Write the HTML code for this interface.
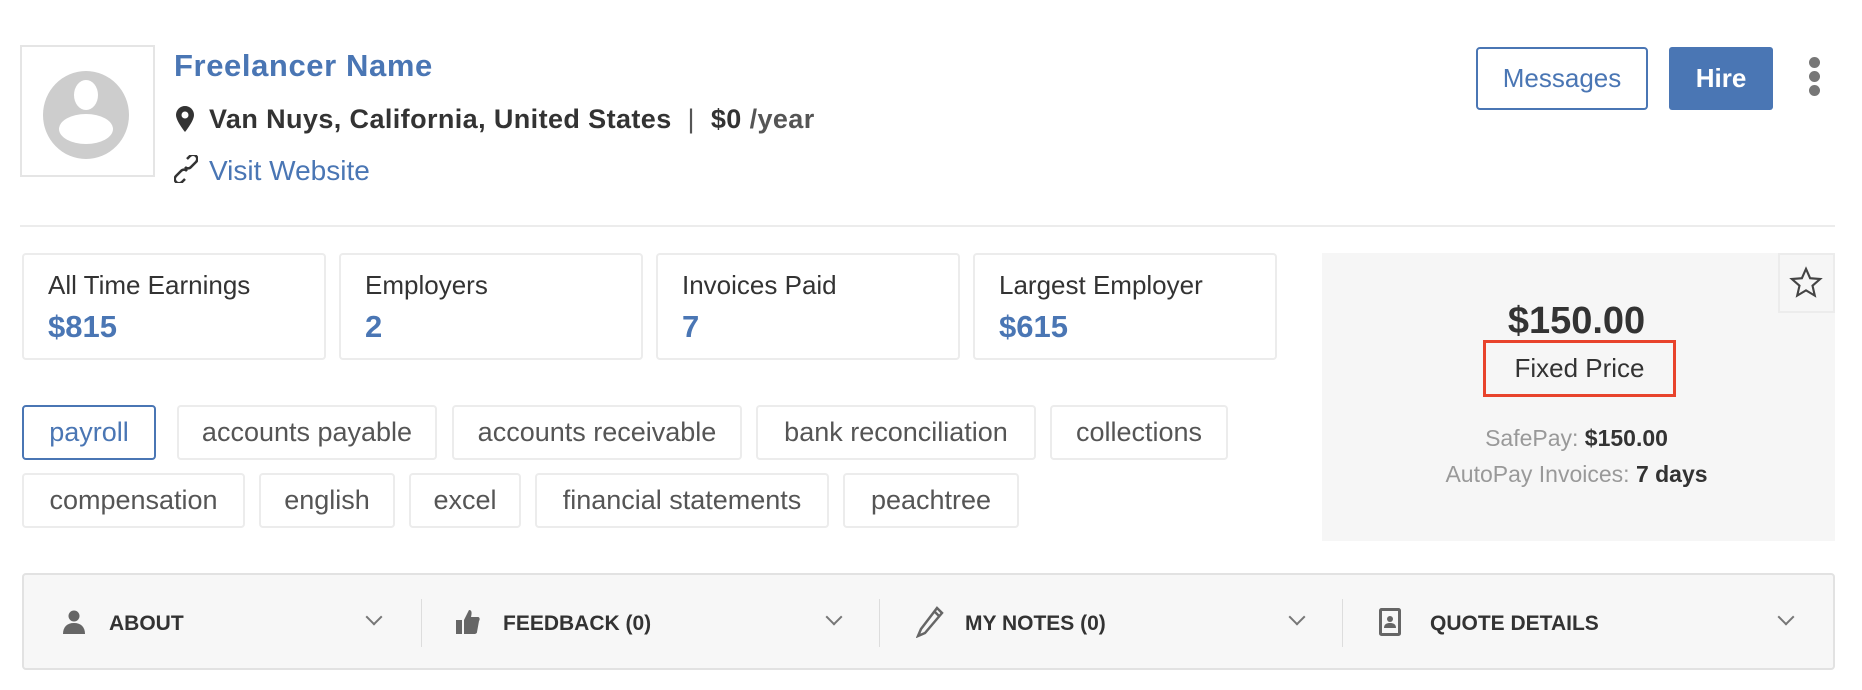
<!DOCTYPE html>
<html><head><meta charset="utf-8"><style>
*{margin:0;padding:0;box-sizing:border-box}
body{width:1862px;height:690px;background:#fff;font-family:"Liberation Sans",sans-serif;color:#333;position:relative;overflow:hidden}
.a{position:absolute}
.blue{color:#4a76b4}
.card{position:absolute;top:253px;height:107px;border:2px solid #ececec;border-radius:4px;padding:13px 24px}
.card .l{font-size:26px;color:#333;margin-top:2px}
.card .v{font-size:31px;font-weight:bold;color:#4a76b4;margin-top:8px}
.tag{position:absolute;height:55px;border:2px solid #ececec;border-radius:4px;font-size:27px;color:#555;line-height:51px;text-align:center;white-space:nowrap}
.sec{position:absolute;top:0;height:97px;display:flex;align-items:center;font-size:21px;font-weight:bold;color:#333}
.chev{position:absolute;top:36px;width:12px;height:12px;border-right:2px solid #777;border-bottom:2px solid #777;transform:rotate(45deg)}
.dv{position:absolute;top:24px;width:1px;height:48px;background:#ddd}
</style></head><body>
<div class="a" style="left:20px;top:45px;width:135px;height:132px;border:2px solid #e5e5e5;background:#fff">
<svg width="131" height="128" viewBox="0 0 131 128"><ellipse cx="64" cy="68" rx="43" ry="44" fill="#cdcdcd"/><ellipse cx="64" cy="48" rx="12" ry="15" fill="#fff"/><ellipse cx="64" cy="82" rx="27" ry="15" fill="#fff"/></svg></div>
<div class="a blue" style="left:174px;top:48px;font-size:31px;font-weight:bold;letter-spacing:0.6px">Freelancer Name</div>
<svg class="a" style="left:176px;top:106px" width="18" height="26" viewBox="0 0 18 26"><path d="M9 0C4 0 0 4 0 9c0 6 9 17 9 17s9-11 9-17c0-5-4-9-9-9z" fill="#333"/><circle cx="9" cy="9" r="3.5" fill="#fff"/></svg>
<div class="a" style="left:209px;top:104px;font-size:27px;font-weight:bold;color:#333;letter-spacing:0.4px">Van Nuys, California, United States <span style="font-weight:normal;color:#555;margin:0 8px">|</span> $0 <span style="color:#555">/year</span></div>
<svg class="a" style="left:174px;top:155px" width="24" height="28" viewBox="0 0 24 28" fill="none" stroke="#333" stroke-width="2.5"><path d="M13 4l3-3a4 4 0 016 6l-5 5a4 4 0 01-6 0"/><path d="M11 24l-3 3a4 4 0 01-6-6l5-5a4 4 0 016 0"/></svg>
<div class="a blue" style="left:209px;top:155px;font-size:28px">Visit Website</div>
<div class="a blue" style="left:1476px;top:47px;width:172px;height:63px;border:2px solid #4a76b4;border-radius:4px;font-size:26px;text-align:center;line-height:59px">Messages</div>
<div class="a" style="left:1669px;top:47px;width:104px;height:63px;background:#4a76b4;border-radius:3px;color:#fff;font-size:26px;font-weight:bold;text-align:center;line-height:63px">Hire</div>
<div class="a" style="left:1809px;top:57px;width:11px;height:11px;border-radius:50%;background:#777"></div>
<div class="a" style="left:1809px;top:71px;width:11px;height:11px;border-radius:50%;background:#777"></div>
<div class="a" style="left:1809px;top:85px;width:11px;height:11px;border-radius:50%;background:#777"></div>
<div class="a" style="left:20px;top:225px;width:1815px;height:2px;background:#ececec"></div>
<div class="card" style="left:22px;width:304px"><div class="l">All Time Earnings</div><div class="v">$815</div></div>
<div class="card" style="left:339px;width:304px"><div class="l">Employers</div><div class="v">2</div></div>
<div class="card" style="left:656px;width:304px"><div class="l">Invoices Paid</div><div class="v">7</div></div>
<div class="card" style="left:973px;width:304px"><div class="l">Largest Employer</div><div class="v">$615</div></div>
<div class="a" style="left:1322px;top:253px;width:513px;height:288px;background:#f6f6f6"></div>
<div class="a" style="left:1778px;top:253px;width:57px;height:60px;border:2px solid #ececec"></div>
<svg class="a" style="left:1789px;top:266px" width="34" height="34" viewBox="0 0 24 24" fill="none" stroke="#444" stroke-width="1.5"><path d="M12 2l2.9 6.6 7.1.6-5.4 4.7 1.6 7-6.2-3.7-6.2 3.7 1.6-7L2 9.2l7.1-.6z"/></svg>
<div class="a" style="left:1320px;top:300px;width:513px;text-align:center;font-size:38px;font-weight:bold;color:#333">$150.00</div>
<div class="a" style="left:1483px;top:340px;width:193px;height:57px;border:3px solid #e8432c;text-align:center;font-size:26px;line-height:51px;color:#333">Fixed Price</div>
<div class="a" style="left:1320px;top:425px;width:513px;text-align:center;font-size:23px;color:#999">SafePay: <b style="color:#333">$150.00</b></div>
<div class="a" style="left:1320px;top:461px;width:513px;text-align:center;font-size:23px;color:#999">AutoPay Invoices: <b style="color:#333">7 days</b></div>
<div class="tag blue" style="left:22px;top:405px;width:134px;border-color:#4a76b4;color:#4a76b4">payroll</div>
<div class="tag" style="left:177px;top:405px;width:260px">accounts payable</div>
<div class="tag" style="left:452px;top:405px;width:290px">accounts receivable</div>
<div class="tag" style="left:756px;top:405px;width:280px">bank reconciliation</div>
<div class="tag" style="left:1050px;top:405px;width:178px">collections</div>
<div class="tag" style="left:22px;top:473px;width:223px">compensation</div>
<div class="tag" style="left:259px;top:473px;width:136px">english</div>
<div class="tag" style="left:409px;top:473px;width:112px">excel</div>
<div class="tag" style="left:535px;top:473px;width:294px">financial statements</div>
<div class="tag" style="left:843px;top:473px;width:176px">peachtree</div>
<div class="a" style="left:22px;top:573px;width:1813px;height:97px;background:#f7f7f7;border:2px solid #e2e2e2;border-radius:4px">
<svg class="a" style="left:38px;top:35px" width="24" height="24" viewBox="0 0 24 24" fill="#666"><circle cx="12" cy="6" r="5.5"/><path d="M1 24c0-7 4-11 11-11s11 4 11 11z"/></svg>
<div class="sec" style="left:85px">ABOUT</div><div class="chev" style="left:344px"></div>
<div class="dv" style="left:397px"></div>
<svg class="a" style="left:432px;top:34px" width="24" height="26" viewBox="0 0 24 26" fill="#666"><rect x="0" y="11" width="6" height="14"/><path d="M8 11l5-10c3 0 3 3 2 7h7c2 0 2 3 1 4l-2 11c0 1-1 2-3 2H8z"/></svg>
<div class="sec" style="left:479px">FEEDBACK (0)</div><div class="chev" style="left:804px"></div>
<div class="dv" style="left:855px"></div>
<svg class="a" style="left:892px;top:31px" width="28" height="32" viewBox="0 0 28 32" fill="none" stroke="#666" stroke-width="2.5"><path d="M21 2l5 5L9 27l-7 3 3-7z"/><path d="M18 5l5 5"/></svg>
<div class="sec" style="left:941px">MY NOTES (0)</div><div class="chev" style="left:1267px"></div>
<div class="dv" style="left:1318px"></div>
<svg class="a" style="left:1355px;top:33px" width="22" height="28" viewBox="0 0 22 28"><rect x="1.5" y="1.5" width="19" height="25" rx="1" fill="none" stroke="#666" stroke-width="3"/><circle cx="11" cy="11" r="3" fill="#666"/><path d="M5 20c0-4 3-5 6-5s6 1 6 5z" fill="#666"/></svg>
<div class="sec" style="left:1406px">QUOTE DETAILS</div><div class="chev" style="left:1756px"></div>
</div>
</body></html>
